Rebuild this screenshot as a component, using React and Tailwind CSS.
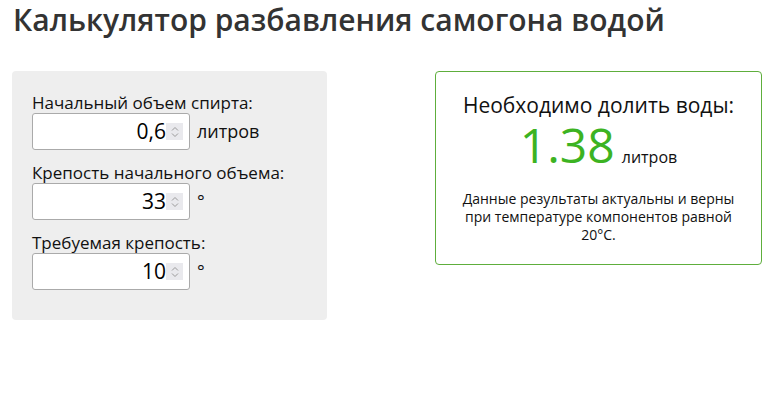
const fields = [
  { label: 'Начальный объем спирта:', value: '0,6', unit: 'литров' },
  { label: 'Крепость начального объема:', value: '33', unit: '°' },
  { label: 'Требуемая крепость:', value: '10', unit: '°' },
]

function Spinner() {
  return (
    <span className="flex h-[17px] w-[17px] shrink-0 flex-col items-center justify-center bg-[#e9e9ed]">
      <svg width="8" height="12" viewBox="0 0 8 12" fill="none" stroke="#9a9a9a" strokeWidth="1">
        <path d="M1 4.5 L4 1.5 L7 4.5" />
        <path d="M1 7.5 L4 10.5 L7 7.5" />
      </svg>
    </span>
  )
}

function Field({ label, value, unit }) {
  return (
    <div className="mb-3">
      <div className="text-[17px] leading-[21px] text-[#111]">{label}</div>
      <div className="flex items-center">
        <div className="flex h-[37px] w-[158px] items-center justify-end rounded-[3px] border border-[#aaa] bg-white pr-[6px]">
          <span className="text-[21px] leading-none text-black">{value}</span>
          <Spinner />
        </div>
        <span className="ml-[7px] text-[18px] text-[#111]">{unit}</span>
      </div>
    </div>
  )
}

export default function App() {
  return (
    <div className="min-h-[408px] bg-white font-['Open_Sans',sans-serif] text-[#222]">
      <h1 className="pl-[13px] pt-0 text-[30px] font-semibold leading-[40px] text-[#333]">
        Калькулятор разбавления самогона водой
      </h1>

      <div className="mt-[31px] flex items-start pl-[12px]">
        {/* форма ввода */}
        <div className="w-[315px] rounded-[4px] bg-[#eeeeee] px-[20px] pb-[18px] pt-[21px]">
          {fields.map((f) => (
            <Field key={f.label} {...f} />
          ))}
        </div>

        {/* результат */}
        <div className="ml-[108px] flex h-[194px] w-[327px] flex-col items-center rounded-[4px] border border-[#5eae3c] px-[20px] pt-[19px] text-center">
          <div className="text-[21px] leading-[28px] text-[#111]">Необходимо долить воды:</div>
          <div className="flex items-baseline leading-none">
            <span className="text-[48px] leading-[52px] text-[#3cb322]">1.38</span>
            <span className="ml-[7px] text-[16px] text-[#111]">литров</span>
          </div>
          <p className="mt-[19px] text-[14px] leading-[18px] text-[#111]">
            Данные результаты актуальны и верны при температуре компонентов равной 20°C.
          </p>
        </div>
      </div>
    </div>
  )
}
